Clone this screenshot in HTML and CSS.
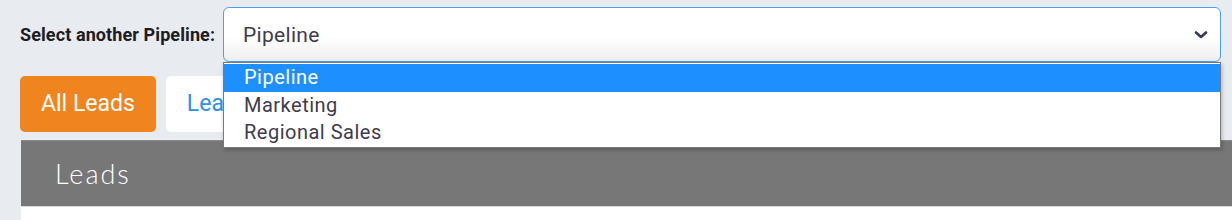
FILE: index.html
```html
<!DOCTYPE html>
<html lang="en">
<head>
    <meta charset="UTF-8">
    <title>Leads</title>
    <link rel="stylesheet" href="styles.css">
</head>
<body>
    <div class="picker-row">
        <label class="picker-label">Select another Pipeline:</label>
        <div class="picker">
            <div class="picker-box">
                <span>Pipeline</span>
                <svg class="chevron" width="14" height="10" viewBox="0 0 14 10">
                    <path d="M2 2.5 L7 7 L12 2.5" fill="none" stroke="#363b55" stroke-width="2.6" stroke-linecap="round" stroke-linejoin="round"/>
                </svg>
            </div>
            <ul class="picker-list">
                <li class="active">Pipeline</li>
                <li>Marketing</li>
                <li>Regional Sales</li>
            </ul>
        </div>
    </div>

    <div class="tabs">
        <a class="tab tab-active">All Leads</a>
        <a class="tab">Leads by Stage</a>
    </div>

    <div class="panel">
        <div class="panel-head">Leads</div>
        <div class="panel-body"></div>
    </div>
</body>
</html>
```

FILE: styles.css
```css
body {
    margin: 0;
    height: 220px;
    background: #e8ebef;
    font-family: Roboto, 'Liberation Sans', sans-serif;
    overflow: hidden;
}
.picker-row {
    display: flex;
    align-items: center;
    padding: 7px 11px 0 20px;
}
.picker-label {
    width: 203px;
    font-size: 18px;
    font-weight: bold;
    letter-spacing: 0.1px;
    color: #1c1c22;
}
.picker {
    flex: 1;
    position: relative;
}
.picker-box {
    height: 53px;
    border: 1px solid #4d9fee;
    border-radius: 6px;
    background: linear-gradient(#ffffff 55%, #eeeeee);
    display: flex;
    align-items: center;
    justify-content: space-between;
    padding: 0 12px 0 19px;
    font-size: 21px;
    letter-spacing: 0.3px;
    color: #3e3b4d;
}
.chevron {
    display: block;
}
.picker-list {
    position: absolute;
    top: 55px;
    left: 0;
    right: 0;
    margin: 0;
    padding: 1px 0 1px 0;
    list-style: none;
    background: white;
    border: 1px solid #7a7a7a;
    box-shadow: 1px 2px 4px rgba(0,0,0,0.25);
    z-index: 2;
}
.picker-list li {
    height: 27px;
    line-height: 27px;
    padding-left: 20px;
    font-size: 20px;
    letter-spacing: 0.5px;
    color: #3e3b4d;
}
.picker-list li.active {
    height: 28px;
    background: #1e8fff;
    color: white;
}
.tabs {
    display: flex;
    gap: 10px;
    padding: 14px 0 0 20px;
}
.tab {
    height: 56px;
    line-height: 56px;
    padding: 0 21px;
    border-radius: 5px;
    background: white;
    color: #2f8fe8;
    font-size: 23px;
    white-space: nowrap;
}
.tab-active {
    background: #f0851f;
    color: white;
}
.panel {
    margin: 8px 0 0 21px;
}
.panel-head {
    height: 66px;
    line-height: 66px;
    background: #777777;
    color: white;
    padding-left: 34px;
    font-family: Lato, sans-serif;
    font-weight: 300;
    font-size: 27px;
    letter-spacing: 2px;
    border-top: 1px solid #8a8a8a;
    box-sizing: border-box;
}
.panel-body {
    height: 14px;
    background: white;
    border-top: 1px solid #d8d8d8;
}
```
